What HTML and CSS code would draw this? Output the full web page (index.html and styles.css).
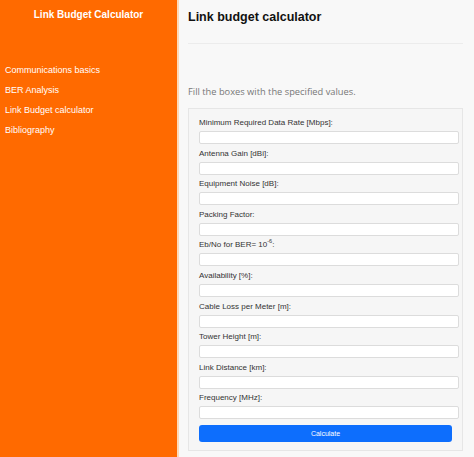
FILE: index.html
```html
<!DOCTYPE html>
<html>
<head>
<meta charset="utf-8">
<link rel="stylesheet" href="styles.css">
</head>
<body>
<div class="layout">
  <nav class="sidebar">
    <div class="brand">Link Budget Calculator</div>
    <ul class="menu">
      <li>Communications basics</li>
      <li>BER Analysis</li>
      <li>Link Budget calculator</li>
      <li>Bibliography</li>
    </ul>
  </nav>
  <main class="main">
    <header class="topbar"><h1 class="title">Link budget calculator</h1></header>
    <p class="intro">Fill the boxes with the specified values.</p>
    <form class="card">
      <div class="field"><label>Minimum Required Data Rate [Mbps]:</label><input type="text"></div>
      <div class="field"><label>Antenna Gain [dBi]:</label><input type="text"></div>
      <div class="field"><label>Equipment Noise [dB]:</label><input type="text"></div>
      <div class="field"><label>Packing Factor:</label><input type="text"></div>
      <div class="field"><label>Eb/No for BER= 10<sup>-6</sup>:</label><input type="text"></div>
      <div class="field"><label>Availability [%]:</label><input type="text"></div>
      <div class="field"><label>Cable Loss per Meter [m]:</label><input type="text"></div>
      <div class="field"><label>Tower Height [m]:</label><input type="text"></div>
      <div class="field"><label>Link Distance [km]:</label><input type="text"></div>
      <div class="field last"><label>Frequency [MHz]:</label><input type="text"></div>
      <button type="button" class="btn">Calculate</button>
    </form>
  </main>
</div>
</body>
</html>
```
FILE: styles.css
```css
html, body {
  margin: 0;
  padding: 0;
  height: 100%;
}
body {
  font-family: "Liberation Sans", Arial, sans-serif;
  background: #f8f8f8;
}
.layout {
  display: flex;
  height: 457px;
  overflow: hidden;
}
.sidebar {
  width: 177px;
  flex: none;
  background: #ff6a00;
  border-right: 2px solid #fdd9b8;
  color: #fff;
}
.brand {
  font-weight: bold;
  font-size: 10px;
  text-align: center;
  padding-top: 9px;
  height: 12px;
  line-height: 12px;
}
.menu {
  list-style: none;
  margin: 43px 0 0 0;
  padding: 0 0 0 5px;
}
.menu li {
  font-size: 9px;
  line-height: 12px;
  height: 20px;
}
.main {
  flex: 1;
  padding-left: 9px;
  padding-right: 12px;
}
.topbar {
  height: 43px;
  border-bottom: 1px solid #ececec;
}
.title {
  margin: 0;
  padding-top: 10px;
  font-size: 12.5px;
  line-height: 14px;
  color: #111;
}
.intro {
  margin: 42px 0 0 0;
  font-family: "Open Sans", sans-serif;
  font-size: 9.3px;
  line-height: 12px;
  color: #777;
}
.card {
  margin-top: 10px;
  width: 260px;
  border: 1px solid #e6e6e6;
  background: #f6f6f6;
  padding: 9px 3px 8px 10px;
  box-sizing: content-box;
}
.field {
  display: flex;
  flex-direction: column;
  margin-bottom: 4.6px;
}
.field.last {
  margin-bottom: 6px;
}
.field label {
  font-size: 8px;
  line-height: 10px;
  color: #333;
  margin-bottom: 3px;
}
.field sup {
  font-size: 5.5px;
  line-height: 0;
}
.field input {
  box-sizing: border-box;
  height: 13px;
  width: 260px;
  margin: 0;
  padding: 0;
  border: 1px solid #dcdcdc;
  border-radius: 2px;
  background: #fff;
}
.btn {
  display: block;
  width: 253px;
  height: 17px;
  margin: 0;
  padding: 0;
  border: none;
  border-radius: 3px;
  background: #0d6efd;
  color: #fff;
  font-family: "Liberation Sans", Arial, sans-serif;
  font-size: 7px;
}
```
